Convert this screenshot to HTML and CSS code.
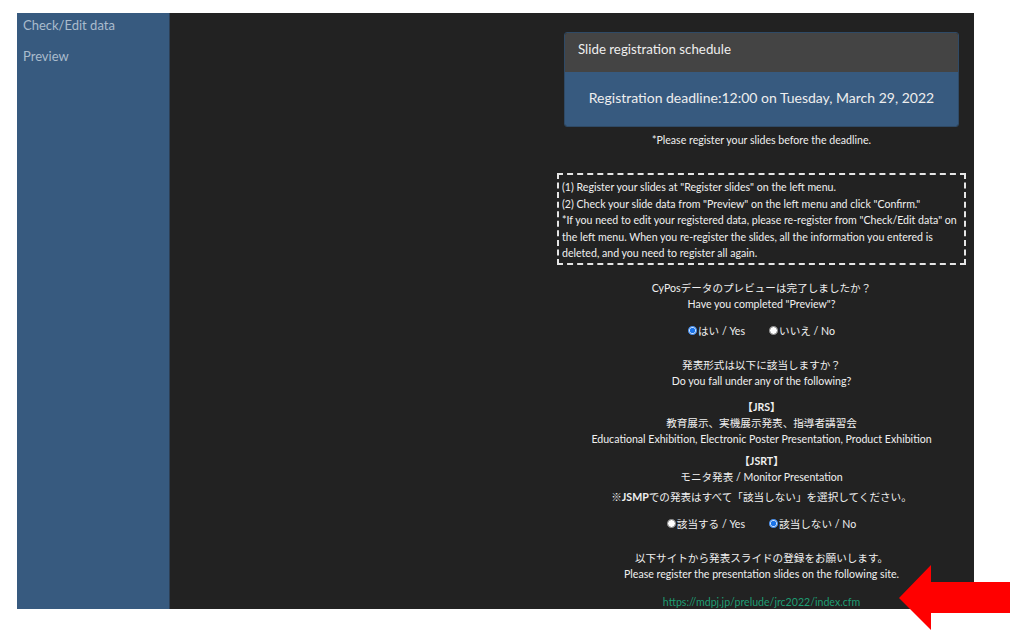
FILE: index.html
```html
<!DOCTYPE html>
<html lang="ja">
<head>
  <meta charset="UTF-8">
  <title>Slide registration</title>
  <link rel="stylesheet" href="styles.css">
</head>
<body>
  <div class="frame">
    <nav class="sidebar">
      <a href="#">Check/Edit data</a>
      <a href="#">Preview</a>
    </nav>

    <main class="main">
      <div class="column">
        <div class="card">
          <div class="card-header">Slide registration schedule</div>
          <div class="card-body">Registration deadline:12:00 on Tuesday, March 29, 2022</div>
        </div>
        <p class="note">*Please register your slides before the deadline.</p>

        <div class="steps">
          (1) Register your slides at "Register slides" on the left menu.<br>
          (2) Check your slide data from "Preview" on the left menu and click "Confirm."<br>
          *If you need to edit your registered data, please re-register from "Check/Edit data" on the left menu. When you re-register the slides, all the information you entered is deleted, and you need to register all again.
        </div>

        <p class="q first">CyPosデータのプレビューは完了しましたか？<br>Have you completed "Preview"?</p>
        <div class="radios">
          <label><input type="radio" name="preview" checked>はい / Yes</label>
          <label><input type="radio" name="preview">いいえ / No</label>
        </div>

        <p class="q second">発表形式は以下に該当しますか？<br>Do you fall under any of the following?</p>

        <p class="group jrs"><strong>【JRS】</strong><br>教育展示、実機展示発表、指導者講習会<br>Educational Exhibition, Electronic Poster Presentation, Product Exhibition</p>
        <p class="group jsrt"><strong>【JSRT】</strong><br>モニタ発表 / Monitor Presentation</p>
        <p class="group jsmp">※<strong>JSMP</strong>での発表はすべて「該当しない」を選択してください。</p>

        <div class="radios">
          <label><input type="radio" name="type">該当する / Yes</label>
          <label><input type="radio" name="type" checked>該当しない / No</label>
        </div>

        <p class="q third">以下サイトから発表スライドの登録をお願いします。<br>Please register the presentation slides on the following site.</p>
        <p class="link"><a href="#">https://mdpj.jp/prelude/jrc2022/index.cfm</a></p>
      </div>
    </main>
  </div>

  <svg class="arrow" width="112" height="66" viewBox="0 0 112 66">
    <polygon points="0,33 32,0 32,17 111,17 111,48 32,48 32,65" fill="#ff0000"/>
  </svg>
</body>
</html>
```

FILE: styles.css
```css
body {
  margin: 0;
  background: #fff;
  font-family: Lato, "Noto Sans CJK JP", sans-serif;
  height: 635px;
  overflow: hidden;
}
.frame {
  display: flex;
  margin: 13px 0 0 17px;
  width: 957px;
  height: 596px;
  background: #222;
  overflow: hidden;
}
.sidebar {
  width: 153px;
  background: #375a7f;
  display: flex;
  flex-direction: column;
  padding: 4px 0 0 6px;
  box-sizing: border-box;
  border-right: 1px solid #2c3f55;
}
.sidebar a {
  color: #aabccd;
  text-decoration: none;
  font-size: 13px;
  line-height: 16px;
  margin-bottom: 15px;
}
.main {
  flex: 1;
  display: flex;
  justify-content: flex-end;
}
.column {
  width: 395px;
  padding: 19px 15px 0;
  color: #f0f0f0;
  font-size: 10.6px;
  line-height: 16px;
  text-align: center;
}
.card {
  border: 1px solid #2f4a66;
  border-radius: 3px;
  overflow: hidden;
  text-align: left;
}
.card-header {
  background: #444;
  height: 39px;
  padding-left: 13px;
  font-size: 13.3px;
  line-height: 32px;
  color: #eee;
}
.card-body {
  background: #375a7f;
  height: 54px;
  font-size: 14px;
  line-height: 52px;
  text-align: center;
  color: #eee;
}
.note {
  margin: 5px 0 0;
}
.steps {
  margin: 25px -7px 0;
  border: 2px dashed #e6e6e6;
  padding: 4px 3px 1px;
  text-align: left;
  line-height: 16.6px;
}
p {
  margin: 0;
}
.q.first {
  margin-top: 15px;
}
.q.second {
  margin-top: 18px;
}
.q.third {
  margin-top: 18px;
}
.radios {
  display: flex;
  justify-content: center;
  gap: 24px;
  margin-top: 11px;
  line-height: 16px;
}
.radios label {
  display: flex;
  align-items: center;
}
.radios input {
  width: 9px;
  height: 9px;
  margin: 0 1px 0 0;
  accent-color: #1a73e8;
}
.group strong {
  font-weight: 700;
}
.jrs {
  margin-top: 10px;
}
.jsrt {
  margin-top: 6px;
}
.jsmp {
  margin-top: 4px;
}
.link {
  margin-top: 12px;
}
.link a {
  color: #1e9e73;
  text-decoration: none;
}
.arrow {
  position: absolute;
  left: 899px;
  top: 565px;
}
```
